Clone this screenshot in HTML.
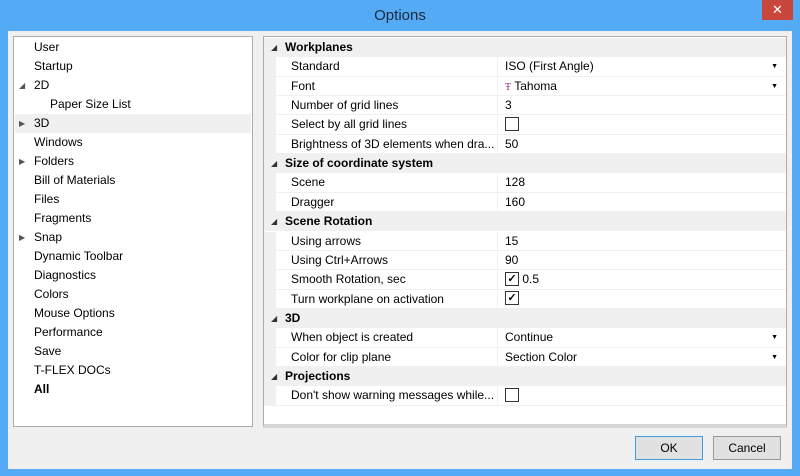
<!DOCTYPE html>
<html><head><style>
*{margin:0;padding:0;box-sizing:border-box}
body{width:800px;height:476px;background:#55aaf5;font-family:"Liberation Sans",sans-serif;font-size:12px;color:#000;position:relative;overflow:hidden}
.title{position:absolute;left:0;top:0;width:800px;height:31px;text-align:center;line-height:31px;font-size:15px;color:#1a2a3a}
.close{position:absolute;left:762px;top:0;width:31px;height:20px;background:#c9463d;color:#fff;text-align:center;line-height:20px;font-size:13px}
.client{position:absolute;left:8px;top:31px;width:784px;height:438px;background:#f0f0f0}
.tree{position:absolute;left:13px;top:36px;width:240px;height:391px;background:#fff;border:1px solid #adadad}
.ti{position:absolute;left:0;height:19px;line-height:19px;width:238px}
.tri{position:absolute;font-size:8px;color:#555}
.grid{position:absolute;left:263px;top:36px;width:524px;height:392px;background:#fff;border:1px solid #adadad;border-bottom:4px solid #d6d6d6}
.r{position:absolute;left:0;width:522px;height:19.35px;line-height:19px}
.cat{background:#f0f0f0;font-weight:bold}
.cat span{position:absolute;left:21px}
.cat i{position:absolute;left:7px;font-style:normal;font-size:8px;font-weight:normal;color:#333}
.p{background:#fff;border-bottom:1px solid #f0f0f0}
.p .strip{position:absolute;left:0;top:0;width:12px;height:100%;background:#f0f0f0}
.p .n{position:absolute;left:27px}
.p .v{position:absolute;left:233px;top:0;height:100%;border-left:1px solid #f0f0f0;padding-left:7px;width:289px}
.dd{position:absolute;right:8px;top:0;font-size:7px}
.cb{display:inline-block;width:14px;height:14px;border:1px solid #333;vertical-align:middle;margin-top:-2px;background:#fff;position:relative;font-size:11px;line-height:12px;text-align:center;font-weight:bold}
.btn{position:absolute;top:436px;width:68px;height:24px;border:1px solid #adadad;background:#e1e1e1;text-align:center;line-height:22px}
</style></head><body>
<div class="title">Options</div>
<div class="close">✕</div>
<div class="client"></div>
<div class="tree">
<div class="ti" style="top:1px"><span style="position:absolute;left:20px">User</span></div>
<div class="ti" style="top:20px"><span style="position:absolute;left:20px">Startup</span></div>
<div class="ti" style="top:39px"><span class="tri" style="left:5px">◢</span><span style="position:absolute;left:20px">2D</span></div>
<div class="ti" style="top:58px"><span style="position:absolute;left:36px">Paper Size List</span></div>
<div class="ti" style="top:77px;background:#f0f0f0;left:1px;width:236px"><span class="tri" style="left:4px">▶</span><span style="position:absolute;left:19px">3D</span></div>
<div class="ti" style="top:96px"><span style="position:absolute;left:20px">Windows</span></div>
<div class="ti" style="top:115px"><span class="tri" style="left:5px">▶</span><span style="position:absolute;left:20px">Folders</span></div>
<div class="ti" style="top:134px"><span style="position:absolute;left:20px">Bill of Materials</span></div>
<div class="ti" style="top:153px"><span style="position:absolute;left:20px">Files</span></div>
<div class="ti" style="top:172px"><span style="position:absolute;left:20px">Fragments</span></div>
<div class="ti" style="top:191px"><span class="tri" style="left:5px">▶</span><span style="position:absolute;left:20px">Snap</span></div>
<div class="ti" style="top:210px"><span style="position:absolute;left:20px">Dynamic Toolbar</span></div>
<div class="ti" style="top:229px"><span style="position:absolute;left:20px">Diagnostics</span></div>
<div class="ti" style="top:248px"><span style="position:absolute;left:20px">Colors</span></div>
<div class="ti" style="top:267px"><span style="position:absolute;left:20px">Mouse Options</span></div>
<div class="ti" style="top:286px"><span style="position:absolute;left:20px">Performance</span></div>
<div class="ti" style="top:305px"><span style="position:absolute;left:20px">Save</span></div>
<div class="ti" style="top:324px"><span style="position:absolute;left:20px">T-FLEX DOCs</span></div>
<div class="ti" style="top:343px;font-weight:bold"><span style="position:absolute;left:20px">All</span></div>
</div>
<div class="grid">
<div class="r cat" style="top:1px"><i>◢</i><span>Workplanes</span></div>
<div class="r p" style="top:20.35px"><div class="strip"></div><span class="n">Standard</span><div class="v">ISO (First Angle)<span class="dd">▼</span></div></div>
<div class="r p" style="top:39.7px"><div class="strip"></div><span class="n">Font</span><div class="v"><span style="color:#a03090;font-size:10px;font-family:'Liberation Serif',serif">Ŧ</span> Tahoma<span class="dd">▼</span></div></div>
<div class="r p" style="top:59.05px"><div class="strip"></div><span class="n">Number of grid lines</span><div class="v">3</div></div>
<div class="r p" style="top:78.4px"><div class="strip"></div><span class="n">Select by all grid lines</span><div class="v"><span class="cb"></span></div></div>
<div class="r p" style="top:97.75px"><div class="strip"></div><span class="n">Brightness of 3D elements when dra...</span><div class="v">50</div></div>
<div class="r cat" style="top:117.1px"><i>◢</i><span>Size of coordinate system</span></div>
<div class="r p" style="top:136.45px"><div class="strip"></div><span class="n">Scene</span><div class="v">128</div></div>
<div class="r p" style="top:155.8px"><div class="strip"></div><span class="n">Dragger</span><div class="v">160</div></div>
<div class="r cat" style="top:175.15px"><i>◢</i><span>Scene Rotation</span></div>
<div class="r p" style="top:194.5px"><div class="strip"></div><span class="n">Using arrows</span><div class="v">15</div></div>
<div class="r p" style="top:213.85px"><div class="strip"></div><span class="n">Using Ctrl+Arrows</span><div class="v">90</div></div>
<div class="r p" style="top:233.2px"><div class="strip"></div><span class="n">Smooth Rotation, sec</span><div class="v"><span class="cb">✓</span> 0.5</div></div>
<div class="r p" style="top:252.55px"><div class="strip"></div><span class="n">Turn workplane on activation</span><div class="v"><span class="cb">✓</span></div></div>
<div class="r cat" style="top:271.9px"><i>◢</i><span>3D</span></div>
<div class="r p" style="top:291.25px"><div class="strip"></div><span class="n">When object is created</span><div class="v">Continue<span class="dd">▼</span></div></div>
<div class="r p" style="top:310.6px"><div class="strip"></div><span class="n">Color for clip plane</span><div class="v">Section Color<span class="dd">▼</span></div></div>
<div class="r cat" style="top:329.95px"><i>◢</i><span>Projections</span></div>
<div class="r p" style="top:349.3px"><div class="strip"></div><span class="n">Don't show warning messages while...</span><div class="v"><span class="cb"></span></div></div>
</div>
<div class="btn" style="left:635px;border-color:#3c9ee0">OK</div>
<div class="btn" style="left:713px;border-color:#999">Cancel</div>
</body></html>
